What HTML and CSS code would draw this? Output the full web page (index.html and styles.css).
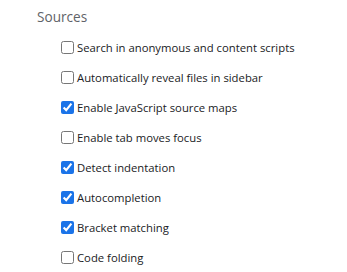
FILE: index.html
```html
<!DOCTYPE html>
<html>
<head>
<meta charset="utf-8">
<link rel="stylesheet" href="styles.css">
</head>
<body>
<section class="section">
  <h2 class="title">Sources</h2>
  <div class="list">
    <label class="row"><input type="checkbox"><span>Search in anonymous and content scripts</span></label>
    <label class="row"><input type="checkbox"><span>Automatically reveal files in sidebar</span></label>
    <label class="row"><input type="checkbox" checked><span>Enable JavaScript source maps</span></label>
    <label class="row"><input type="checkbox"><span>Enable tab moves focus</span></label>
    <label class="row"><input type="checkbox" checked><span>Detect indentation</span></label>
    <label class="row"><input type="checkbox" checked><span>Autocompletion</span></label>
    <label class="row"><input type="checkbox" checked><span>Bracket matching</span></label>
    <label class="row"><input type="checkbox"><span>Code folding</span></label>
  </div>
</section>
</body>
</html>
```
FILE: styles.css
```css
html, body {
  margin: 0;
  padding: 0;
  background: #ffffff;
}
body {
  font-family: "Open Sans", "Liberation Sans", sans-serif;
  color: #202124;
}
.section {
  padding: 7px 0 0 37px;
}
.title {
  margin: 0;
  font-size: 13.6px;
  font-weight: 400;
  line-height: 20px;
  color: #5f6368;
}
.list {
  display: flex;
  flex-direction: column;
  padding: 5px 0 0 24px;
}
.row {
  display: flex;
  align-items: center;
  height: 30px;
  font-size: 11.3px;
}
.row input {
  margin: 0 3px 0 0;
  width: 13px;
  height: 13px;
  accent-color: #1a73e8;
}
```
